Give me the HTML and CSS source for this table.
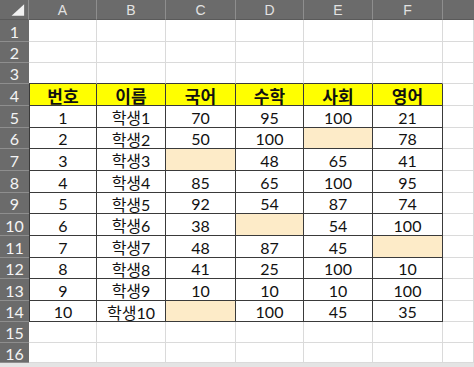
FILE: index.html
```html
<!DOCTYPE html>
<html lang="ko">
<head>
<meta charset="utf-8">
<link rel="stylesheet" href="styles.css">
</head>
<body>
<div class="sheet">
  <div class="ch corner"><svg width="29" height="20" viewBox="0 0 29 20"><polygon points="12,16 25,16 25,4" fill="#f2f2f2"/></svg></div>
  <div class="ch">A</div><div class="ch">B</div><div class="ch">C</div><div class="ch">D</div><div class="ch">E</div><div class="ch">F</div><div class="ch last"></div>

  <div class="rh">1</div><div class="c"></div><div class="c"></div><div class="c"></div><div class="c"></div><div class="c"></div><div class="c"></div><div class="c"></div>
  <div class="rh">2</div><div class="c"></div><div class="c"></div><div class="c"></div><div class="c"></div><div class="c"></div><div class="c"></div><div class="c"></div>
  <div class="rh">3</div><div class="c tt"></div><div class="c tt"></div><div class="c tt"></div><div class="c tt"></div><div class="c tt"></div><div class="c tt"></div><div class="c"></div>

  <div class="rh">4</div><div class="c t hd first">번호</div><div class="c t hd">이름</div><div class="c t hd">국어</div><div class="c t hd">수학</div><div class="c t hd">사회</div><div class="c t hd">영어</div><div class="c"></div>
  <div class="rh">5</div><div class="c t first">1</div><div class="c t">학생1</div><div class="c t">70</div><div class="c t">95</div><div class="c t">100</div><div class="c t">21</div><div class="c"></div>
  <div class="rh">6</div><div class="c t first">2</div><div class="c t">학생2</div><div class="c t">50</div><div class="c t">100</div><div class="c t miss"></div><div class="c t">78</div><div class="c"></div>
  <div class="rh">7</div><div class="c t first">3</div><div class="c t">학생3</div><div class="c t miss"></div><div class="c t">48</div><div class="c t">65</div><div class="c t">41</div><div class="c"></div>
  <div class="rh">8</div><div class="c t first">4</div><div class="c t">학생4</div><div class="c t">85</div><div class="c t">65</div><div class="c t">100</div><div class="c t">95</div><div class="c"></div>
  <div class="rh">9</div><div class="c t first">5</div><div class="c t">학생5</div><div class="c t">92</div><div class="c t">54</div><div class="c t">87</div><div class="c t">74</div><div class="c"></div>
  <div class="rh">10</div><div class="c t first">6</div><div class="c t">학생6</div><div class="c t">38</div><div class="c t miss"></div><div class="c t">54</div><div class="c t">100</div><div class="c"></div>
  <div class="rh">11</div><div class="c t first">7</div><div class="c t">학생7</div><div class="c t">48</div><div class="c t">87</div><div class="c t">45</div><div class="c t miss"></div><div class="c"></div>
  <div class="rh">12</div><div class="c t first">8</div><div class="c t">학생8</div><div class="c t">41</div><div class="c t">25</div><div class="c t">100</div><div class="c t">10</div><div class="c"></div>
  <div class="rh">13</div><div class="c t first">9</div><div class="c t">학생9</div><div class="c t">10</div><div class="c t">10</div><div class="c t">10</div><div class="c t">100</div><div class="c"></div>
  <div class="rh">14</div><div class="c t first">10</div><div class="c t">학생10</div><div class="c t miss"></div><div class="c t">100</div><div class="c t">45</div><div class="c t">35</div><div class="c"></div>

  <div class="rh">15</div><div class="c"></div><div class="c"></div><div class="c"></div><div class="c"></div><div class="c"></div><div class="c"></div><div class="c"></div>
  <div class="rh">16</div><div class="c"></div><div class="c"></div><div class="c"></div><div class="c"></div><div class="c"></div><div class="c"></div><div class="c"></div>
</div>
</body>
</html>
```

FILE: styles.css
```css
html, body {
  margin: 0;
  padding: 0;
  background: #e4e4e4;
  overflow: hidden;
}
body {
  width: 474px;
  height: 367px;
  font-family: "Lato", "Noto Sans CJK KR", sans-serif;
}
.sheet {
  display: grid;
  grid-template-columns: 29px 68px 69px 70px 68px 69px 70px 31px;
  grid-template-rows: 20px 22px 21px 21px 22px 22px 21px 22px 22px 21px 22px 22px 21px 22px 21px 21px 20px;
  background: #fff;
}
.sheet > div {
  box-sizing: border-box;
  display: flex;
  align-items: center;
  justify-content: center;
  overflow: hidden;
  white-space: nowrap;
}
.ch {
  background: #6b6b6b;
  color: #e2e2e2;
  font-family: "Liberation Sans", sans-serif;
  font-size: 14px;
  border-right: 1px solid #8e8e8e;
  border-bottom: 1px solid #5a5a5a;
}
.ch.corner {
  border-right: 1px solid #8e8e8e;
  padding: 0;
}
.ch.corner svg { display: block; }
.ch.last { border-right: none; }
.rh {
  background: #6b6b6b;
  color: #f4f4f4;
  font-family: "Lato", sans-serif;
  font-size: 16px;
  border-bottom: 1px solid #8e8e8e;
  padding-top: 1px;
}
.c {
  border-right: 1px solid #dadada;
  border-bottom: 1px solid #dadada;
  color: #111;
  font-size: 16px;
}
.c.tt { border-bottom-color: #3a3a3a; }
.c.t {
  border-right-color: #3a3a3a;
  border-bottom-color: #3a3a3a;
  padding-top: 1px;
}
.c.t.first { border-left: 1px solid #3a3a3a; }
.c.hd {
  background: #ffff00;
  font-weight: 700;
  font-size: 17px;
}
.c.miss { background: #fdebc8; }
```
